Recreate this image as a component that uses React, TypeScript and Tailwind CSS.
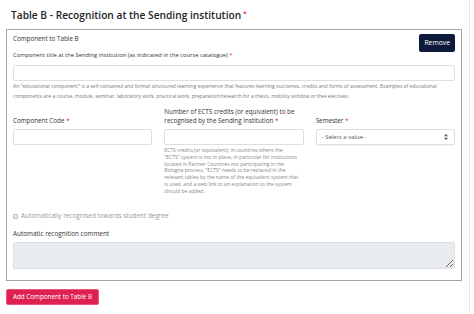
import React from 'react';

const helpTop =
  'An "educational component" is a self-contained and formal structured learning experience that features learning outcomes, credits and forms of assessment. Examples of educational components are a course, module, seminar, laboratory work, practical work, preparation/research for a thesis, mobility window or free electives.';

const ectsHelp = [
  'ECTS credits (or equivalent): in countries where the',
  '"ECTS" system is not in place, in particular for institutions',
  'located in Partner Countries not participating in the',
  'Bologna process, "ECTS" needs to be replaced in the',
  'relevant tables by the name of the equivalent system that',
  'is used, and a web link to an explanation to the system',
  'should be added.',
];

function Req() {
  return <span className="text-[#dc3545]"> *</span>;
}

function Input({ className = '' }: { className?: string }) {
  return (
    <input
      type="text"
      className={`block w-full h-[16px] border border-[#dedede] rounded-[2px] bg-white outline-none ${className}`}
    />
  );
}

export default function App() {
  return (
    <div className="w-[474px] h-[314px] bg-white overflow-hidden font-['Open_Sans',sans-serif] text-[#333]">
      <div className="w-[470px] h-full border-r border-[#e8e8e8] pl-[6px] pr-[7px]">
        {/* Heading */}
        <div className="h-[29px] flex items-center pl-[5px] pt-[1px]">
          <h2 className="text-[10.2px] font-semibold text-[#212529] leading-none">
            Table B - Recognition at the Sending institution
            <span className="text-[#dc3545] text-[7px] align-top"> *</span>
          </h2>
        </div>

        {/* Component card */}
        <div className="border border-[#a4a4a4] px-[6px] pt-[4px] pb-[11px]">
          <div className="flex justify-between items-start h-[17px]">
            <span className="text-[6.3px] leading-[9px]">Component to Table B</span>
            <button className="h-[18px] px-[5px] bg-[#0e1a3c] rounded-[2px] text-white text-[6.8px] leading-none">
              Remove
            </button>
          </div>
          <div className="text-[5.8px] leading-[9px]">
            Component title at the Sending institution (as indicated in the course catalogue)
            <Req />
          </div>
          <Input className="mt-[5px] h-[15px]" />
          <p className="mt-[1px] text-[5px] leading-[9.5px] text-[#777]">{helpTop}</p>

          {/* three column labels */}
          <div className="grid grid-cols-3 gap-x-[12px] items-end mt-[6px] text-[6.3px] leading-[9px]">
            <div>
              Component Code<Req />
            </div>
            <div>
              Number of ECTS credits (or equivalent) to be
              <br />
              recognised by the Sending Institution
              <Req />
            </div>
            <div className="pb-[0.5px]">
              Semester<Req />
            </div>
          </div>
          <div className="grid grid-cols-3 gap-x-[12px] items-start mt-[4px]">
            <Input />
            <div>
              <Input />
              <div className="mt-[2px] text-[5px] leading-[6.8px] text-[#888]">
                {ectsHelp.map((l) => (
                  <div key={l} className="whitespace-nowrap">
                    {l}
                  </div>
                ))}
              </div>
            </div>
            <div className="h-[16px] border border-[#dedede] rounded-[2px] bg-white flex items-center justify-between pl-[5px] pr-[6px] shadow-[0_1px_1px_rgba(0,0,0,0.04)]">
              <span className="text-[6px] text-[#555]">- Select a value -</span>
              <svg width="4" height="6" viewBox="0 0 4 6">
                <path d="M2 0 L4 2.3 H0 Z M2 6 L0 3.7 H4 Z" fill="#555" />
              </svg>
            </div>
          </div>

          {/* checkbox */}
          <label className="mt-[17px] flex items-center gap-[3px] h-[9px] text-[6.4px] text-[#999]">
            <span className="w-[5px] h-[5px] border border-[#bbb] bg-[#eee] rounded-[1px]" />
            Automatically recognised towards student degree
          </label>

          <div className="mt-[8px] text-[6.4px] leading-[9px]">Automatic recognition comment</div>
          <textarea
            readOnly
            className="mt-[4px] block w-full h-[27px] bg-[#e9ecef] border border-[#dcdfe3] rounded-[2px] resize-y outline-none"
          />
        </div>

        <button className="mt-[8px] h-[16px] w-[93px] bg-[#df2152] rounded-[2px] text-white text-[6.3px] leading-none border border-[#e9577c]">
          Add Component to Table B
        </button>
      </div>
    </div>
  );
}
